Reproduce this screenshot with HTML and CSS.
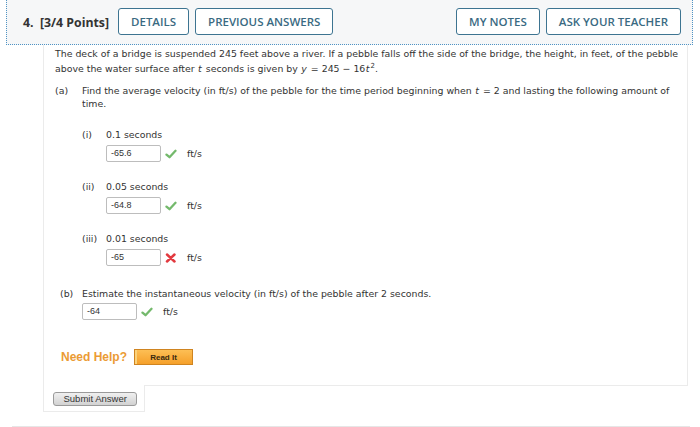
FILE: index.html
```html
<!DOCTYPE html>
<html>
<head>
<meta charset="utf-8">
<link rel="stylesheet" href="styles.css">
</head>
<body>
<div class="page">
  <div class="header">
    <div class="qtitle">4.&nbsp; [3/4 Points]</div>
    <div class="btn">DETAILS</div>
    <div class="btn">PREVIOUS ANSWERS</div>
    <div class="spacer"></div>
    <div class="btn">MY NOTES</div>
    <div class="btn">ASK YOUR TEACHER</div>
  </div>
  <div class="qwrap">
    <div class="box">
      <p class="intro">The deck of a bridge is suspended 245 feet above a river. If a pebble falls off the side of the bridge, the height, in feet, of the pebble above the water surface after <i>t</i> seconds is given by <i>y</i> = 245 − 16<i>t</i><sup>2</sup>.</p>
      <div class="part parta">
        <div class="plabel">(a)</div>
        <div class="ptext">Find the average velocity (in ft/s) of the pebble for the time period beginning when <i>t</i> = 2 and lasting the following amount of time.</div>
      </div>
      <div class="sub sub1">
        <div class="slabel">(i)</div>
        <div class="sbody">
          <div class="stext">0.1 seconds</div>
          <div class="ansrow">
            <div class="inp">-65.6</div>
            <svg class="mark" width="12" height="10" viewBox="0 0 12 10"><path d="M1.5 5.6 L4.5 8.2 L10.5 1.8" fill="none" stroke="#74b96c" stroke-width="2.3" stroke-linecap="round" stroke-linejoin="round"/></svg>
            <span class="unit">ft/s</span>
          </div>
        </div>
      </div>
      <div class="sub">
        <div class="slabel">(ii)</div>
        <div class="sbody">
          <div class="stext">0.05 seconds</div>
          <div class="ansrow">
            <div class="inp">-64.8</div>
            <svg class="mark" width="12" height="10" viewBox="0 0 12 10"><path d="M1.5 5.6 L4.5 8.2 L10.5 1.8" fill="none" stroke="#74b96c" stroke-width="2.3" stroke-linecap="round" stroke-linejoin="round"/></svg>
            <span class="unit">ft/s</span>
          </div>
        </div>
      </div>
      <div class="sub">
        <div class="slabel">(iii)</div>
        <div class="sbody">
          <div class="stext">0.01 seconds</div>
          <div class="ansrow">
            <div class="inp">-65</div>
            <svg class="mark" width="12" height="10" viewBox="0 0 12 10"><path d="M2 1.5 L9.5 8.5 M9.5 1.5 L2 8.5" fill="none" stroke="#e2393f" stroke-width="2.5" stroke-linecap="round"/></svg>
            <span class="unit">ft/s</span>
          </div>
        </div>
      </div>
      <div class="part partb">
        <div class="plabel">(b)</div>
        <div class="pbody">
          <div class="ptext">Estimate the instantaneous velocity (in ft/s) of the pebble after 2 seconds.</div>
          <div class="ansrow ansb">
            <div class="inp">-64</div>
            <svg class="mark" width="12" height="10" viewBox="0 0 12 10"><path d="M1.5 5.6 L4.5 8.2 L10.5 1.8" fill="none" stroke="#74b96c" stroke-width="2.3" stroke-linecap="round" stroke-linejoin="round"/></svg>
            <span class="unit">ft/s</span>
          </div>
        </div>
      </div>
      <div class="help">
        <span class="helptext">Need Help?</span>
        <span class="readit">Read It</span>
      </div>
    </div>
    <div class="foot">
      <div class="tab"><span class="submit">Submit Answer</span></div>
      <div class="fill"></div>
    </div>
  </div>
  <div class="rule"></div>
</div>
</body>
</html>
```
FILE: styles.css
```css
html, body {
  margin: 0;
  padding: 0;
  background: #ffffff;
}
body {
  font-family: "DejaVu Sans", Verdana, sans-serif;
  color: #333333;
}
.page {
  width: 700px;
  height: 427px;
  overflow: hidden;
}
.header {
  margin-left: 6px;
  width: 685px;
  height: 44px;
  box-sizing: content-box;
  background: #f6f7f8;
  border-left: 1px dotted #4f93c4;
  border-right: 1px dotted #4f93c4;
  border-bottom: 1px dotted #4f93c4;
  display: flex;
  align-items: center;
}
.qtitle {
  font-family: "Open Sans", sans-serif;
  font-weight: 700;
  font-size: 12.3px;
  color: #333;
  margin-left: 16px;
  margin-right: 9px;
}
.btn {
  font-family: "Open Sans", sans-serif;
  font-weight: 600;
  font-size: 11.5px;
  color: #3a6a82;
  background: #ffffff;
  border: 1.5px solid #3d7491;
  border-radius: 3px;
  height: 25px;
  padding: 0 12px;
  display: flex;
  align-items: center;
  margin-right: 6px;
  margin-bottom: 2px;
}
.btn:last-child {
  margin-right: 11px;
}
.spacer {
  flex: 1;
}
.qwrap {
  margin-left: 43px;
  width: 645px;
}
.box {
  border-left: 1px solid #ebebeb;
  border-right: 1px solid #ebebeb;
  padding: 0 0 0 11px;
  height: 340px;
  font-size: 9.4px;
}
.intro {
  margin: 0;
  line-height: 15px;
  padding-top: 1px;
}
i {
  display: inline-block;
  padding: 0 1px 0 0.5px;
}
sup {
  display: inline-block;
  font-size: 7px;
  line-height: 0;
  vertical-align: 4px;
}
.part {
  display: flex;
}
.parta {
  margin-top: 8px;
  line-height: 13px;
}
.plabel {
  width: 27px;
  flex: none;
}
.ptext {
  flex: 1;
  padding-right: 6px;
}
.sub {
  display: flex;
  margin-left: 27px;
  margin-top: 18px;
  line-height: 13px;
}
.sub1 {
  margin-top: 18px;
}
.slabel {
  width: 24px;
  flex: none;
}
.ansrow {
  display: flex;
  align-items: center;
  margin-top: 4px;
  height: 17px;
}
.ansb {
  margin-top: 3px;
}
.inp {
  height: 15px;
  border: 1px solid #bdbdbd;
  border-radius: 2px;
  font-family: "Liberation Sans", Arial, sans-serif;
  font-size: 9px;
  line-height: 15px;
  padding-left: 4px;
  box-sizing: content-box;
  width: 49px;
  color: #333;
  background: #fff;
}
.mark {
  margin-left: 4px;
  flex: none;
}
.unit {
  margin-left: 10px;
}
.partb {
  margin-top: 21px;
  line-height: 13px;
}
.partb .plabel {
  padding-left: 5px;
  width: 22px;
}
.help {
  display: flex;
  align-items: center;
  margin-top: 29px;
  margin-left: 6px;
}
.helptext {
  font-family: "Liberation Sans", Arial, sans-serif;
  font-weight: 700;
  font-size: 12px;
  color: #eb9b35;
}
.readit {
  margin-left: 7px;
  width: 57px;
  height: 14px;
  border: 1px solid #cf8420;
  background: linear-gradient(#fdbf55, #f5a02a);
  box-shadow: inset 2px 0 0 #fbd27a;
  font-family: "Liberation Sans", Arial, sans-serif;
  font-weight: 700;
  font-size: 8px;
  color: #3a2a10;
  display: flex;
  align-items: center;
  justify-content: center;
}
.foot {
  display: flex;
}
.tab {
  width: 102px;
  height: 27px;
  border-left: 1px solid #ebebeb;
  border-right: 1px solid #ebebeb;
  border-bottom: 1px solid #ebebeb;
  padding-left: 9px;
  box-sizing: border-box;
  display: flex;
  align-items: flex-start;
  padding-top: 7px;
}
.fill {
  flex: 1;
  border-top: 1px solid #ebebeb;
  border-right: 1px solid #ebebeb;
  height: 0;
}
.submit {
  font-family: "Liberation Sans", Arial, sans-serif;
  font-size: 9.5px;
  color: #333;
  height: 12px;
  line-height: 12px;
  padding: 0 9.5px;
  border: 1px solid #9a9a9a;
  border-radius: 3px;
  background: linear-gradient(#f0f0f0, #d2d2d2);
}
.rule {
  margin-top: 14px;
  margin-left: 12px;
  width: 678px;
  height: 2px;
  background: #e6e6e6;
}
```
